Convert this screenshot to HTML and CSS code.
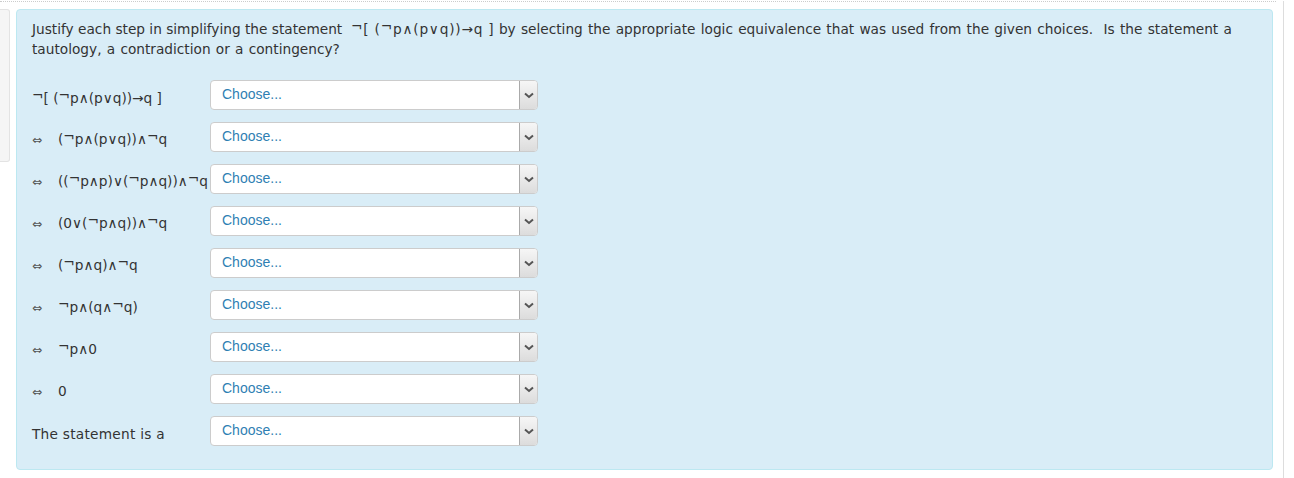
FILE: index.html
```html
<!DOCTYPE html>
<html>
<head>
<meta charset="utf-8">
<link rel="stylesheet" href="styles.css">
</head>
<body>
<div class="page">
  <div class="main">
    <div class="info"></div>
    <div class="panel">
      <p class="question">Justify each step in simplifying the statement &nbsp;<span class="formula"><span class="neg">¬</span>[ (<span class="neg">¬</span>p∧(p∨q))→q ]</span> <span class="rest">by selecting the appropriate logic equivalence that was used from the given choices.&nbsp; Is the statement a tautology, a contradiction or a contingency?</span></p>
      <div class="rows">
        <div class="label"><span class="neg">¬</span>[ (<span class="neg">¬</span>p∧(p∨q))→q ]</div>
        <div class="select"><span class="choose">Choose...</span><span class="arrow"><svg width="10" height="7" viewBox="0 0 10 7"><path d="M1 1.5 L5 5 L9 1.5" fill="none" stroke="#555" stroke-width="2"/></svg></span></div>

        <div class="label"><span class="iff">⇔</span>(<span class="neg">¬</span>p∧(p∨q))∧<span class="neg">¬</span>q</div>
        <div class="select"><span class="choose">Choose...</span><span class="arrow"><svg width="10" height="7" viewBox="0 0 10 7"><path d="M1 1.5 L5 5 L9 1.5" fill="none" stroke="#555" stroke-width="2"/></svg></span></div>

        <div class="label"><span class="iff">⇔</span>((<span class="neg">¬</span>p∧p)∨(<span class="neg">¬</span>p∧q))∧<span class="neg">¬</span>q</div>
        <div class="select"><span class="choose">Choose...</span><span class="arrow"><svg width="10" height="7" viewBox="0 0 10 7"><path d="M1 1.5 L5 5 L9 1.5" fill="none" stroke="#555" stroke-width="2"/></svg></span></div>

        <div class="label"><span class="iff">⇔</span>(0∨(<span class="neg">¬</span>p∧q))∧<span class="neg">¬</span>q</div>
        <div class="select"><span class="choose">Choose...</span><span class="arrow"><svg width="10" height="7" viewBox="0 0 10 7"><path d="M1 1.5 L5 5 L9 1.5" fill="none" stroke="#555" stroke-width="2"/></svg></span></div>

        <div class="label"><span class="iff">⇔</span>(<span class="neg">¬</span>p∧q)∧<span class="neg">¬</span>q</div>
        <div class="select"><span class="choose">Choose...</span><span class="arrow"><svg width="10" height="7" viewBox="0 0 10 7"><path d="M1 1.5 L5 5 L9 1.5" fill="none" stroke="#555" stroke-width="2"/></svg></span></div>

        <div class="label"><span class="iff">⇔</span><span class="neg">¬</span>p∧(q∧<span class="neg">¬</span>q)</div>
        <div class="select"><span class="choose">Choose...</span><span class="arrow"><svg width="10" height="7" viewBox="0 0 10 7"><path d="M1 1.5 L5 5 L9 1.5" fill="none" stroke="#555" stroke-width="2"/></svg></span></div>

        <div class="label"><span class="iff">⇔</span><span class="neg">¬</span>p∧0</div>
        <div class="select"><span class="choose">Choose...</span><span class="arrow"><svg width="10" height="7" viewBox="0 0 10 7"><path d="M1 1.5 L5 5 L9 1.5" fill="none" stroke="#555" stroke-width="2"/></svg></span></div>

        <div class="label"><span class="iff">⇔</span>0</div>
        <div class="select"><span class="choose">Choose...</span><span class="arrow"><svg width="10" height="7" viewBox="0 0 10 7"><path d="M1 1.5 L5 5 L9 1.5" fill="none" stroke="#555" stroke-width="2"/></svg></span></div>

        <div class="label stmt">The statement is a</div>
        <div class="select"><span class="choose">Choose...</span><span class="arrow"><svg width="10" height="7" viewBox="0 0 10 7"><path d="M1 1.5 L5 5 L9 1.5" fill="none" stroke="#555" stroke-width="2"/></svg></span></div>
      </div>
    </div>
  </div>
  <div class="sidebar"></div>
</div>
</body>
</html>
```

FILE: styles.css
```css
html, body {
  margin: 0;
  padding: 0;
  background: #fff;
}
body {
  font-family: "DejaVu Sans", Verdana, sans-serif;
  font-size: 13.7px;
  color: #333;
}
.page {
  display: flex;
  padding-top: 1px;
  height: 477px;
}
.main {
  width: 1276px;
  border-top: 1px dotted #ccc;
  padding-top: 7px;
  display: flex;
  align-items: flex-start;
  gap: 6px;
}
.info {
  width: 10px;
  height: 153px;
  background: #f5f5f5;
  border: 1px solid #e3e3e3;
  border-left: none;
  border-radius: 0 3px 3px 0;
  box-sizing: border-box;
}
.panel {
  width: 1257px;
  box-sizing: border-box;
  background: #d9edf7;
  border: 1px solid #bce8f1;
  border-radius: 4px;
  padding: 9px 15px 23px 15px;
}
.question {
  margin: 0 0 21px 0;
  line-height: 20px;
  padding-right: 12px;
}
.formula {
  letter-spacing: 0.8px;
}
.rest {
  word-spacing: 0.9px;
}
.rows {
  display: grid;
  grid-template-columns: 178px 328px;
  row-gap: 12px;
  align-items: center;
}
.label {
  white-space: nowrap;
  line-height: 20px;
  padding-top: 5px;
}
.stmt {
  letter-spacing: 0.25px;
}
.iff {
  display: inline-block;
  font-size: 12px;
  width: 26px;
  color: #555;
}
.neg {
  position: relative;
  top: -3px;
}
.select {
  height: 30px;
  box-sizing: border-box;
  background: #fff;
  border: 1px solid #ccc;
  border-radius: 4px;
  display: flex;
  align-items: stretch;
  justify-content: space-between;
  overflow: hidden;
}
.choose {
  font-family: "Liberation Sans", Arial, sans-serif;
  font-size: 14px;
  color: #2f7fb3;
  padding-left: 11px;
  line-height: 27px;
}
.arrow {
  width: 17px;
  border-left: 1px solid #aaa;
  background: linear-gradient(#f6f6f6, #dcdcdc);
  display: flex;
  align-items: center;
  justify-content: center;
}
.sidebar {
  margin-left: 7px;
  border-left: 1px solid #ddd;
  width: 10px;
}
```
